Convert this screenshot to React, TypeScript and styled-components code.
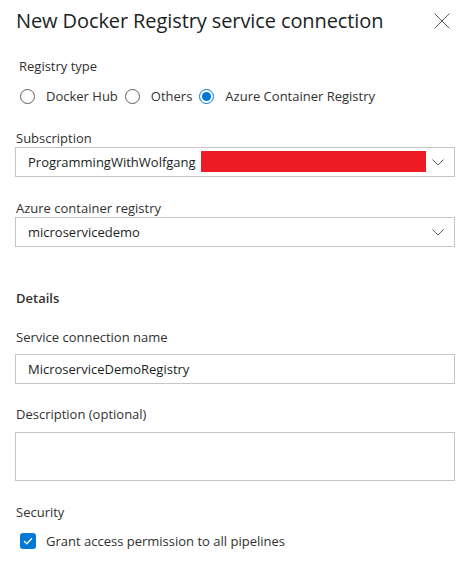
import styled, { createGlobalStyle } from "styled-components";

const textColor = "#201f1e";
const borderColor = "#c8c6c4";
const accent = "#0078d4";

const GlobalStyle = createGlobalStyle`
  body {
    margin: 0;
    background: #ffffff;
    font-family: "Open Sans", "Noto Sans", sans-serif;
    color: ${textColor};
  }
`;

const Panel = styled.div`
  width: 471px;
  height: 572px;
  box-sizing: border-box;
  padding: 7px 16px 0 15px;
  display: flex;
  flex-direction: column;
`;

const Header = styled.div`
  display: flex;
  align-items: center;
  justify-content: space-between;
  height: 28px;
  padding-left: 1px;
`;

const Title = styled.h1`
  margin: 0;
  font-size: 20px;
  font-weight: 400;
  letter-spacing: -0.1px;
  line-height: 28px;
`;

const CloseButton = styled.button`
  border: 0;
  background: none;
  padding: 0;
  margin-right: 4px;
  width: 18px;
  height: 18px;
  display: flex;
  align-items: center;
  justify-content: center;
`;

const Label = styled.div<{ $top: number; $indent?: number }>`
  margin-top: ${(p) => p.$top}px;
  padding-left: ${(p) => p.$indent ?? 1}px;
  font-size: 13px;
  line-height: 18px;
  color: #323130;
`;

const SectionTitle = styled(Label)`
  font-weight: 600;
`;

const RadioRow = styled.div`
  margin-top: 11px;
  display: flex;
  align-items: center;
  padding-left: 5px;
  height: 20px;
`;

const RadioOption = styled.label`
  display: flex;
  align-items: center;
  margin-right: 7px;
  font-size: 13px;
  color: #323130;
`;

const RadioCircle = styled.span<{ $checked?: boolean }>`
  width: 13px;
  height: 13px;
  border-radius: 50%;
  border: 1px solid ${(p) => (p.$checked ? accent : "#605e5c")};
  margin-right: 11px;
  display: flex;
  align-items: center;
  justify-content: center;
  &::after {
    content: "";
    width: 9px;
    height: 9px;
    border-radius: 50%;
    background: ${(p) => (p.$checked ? accent : "transparent")};
  }
`;

const Field = styled.div<{ $height?: number; $gap?: number }>`
  margin-top: ${(p) => p.$gap ?? 0}px;
  height: ${(p) => p.$height ?? 30}px;
  box-sizing: border-box;
  border: 1px solid ${borderColor};
  display: flex;
  align-items: center;
  padding: 0 10px 0 12px;
  font-size: 13px;
  color: ${textColor};
`;

const FieldText = styled.span`
  white-space: nowrap;
`;

const Redacted = styled.span`
  flex: 1;
  align-self: stretch;
  margin: 3px 6px 4px 5px;
  background: #ed1c24;
`;

const Chevron = styled.span`
  margin-left: auto;
  display: flex;
`;

const CheckRow = styled.label`
  margin-top: 11px;
  padding-left: 5px;
  display: flex;
  align-items: center;
  font-size: 13px;
  line-height: 18px;
  color: #323130;
`;

const CheckBox = styled.span`
  width: 16px;
  height: 16px;
  border-radius: 3px;
  background: ${accent};
  margin-right: 10px;
  display: flex;
  align-items: center;
  justify-content: center;
`;

const ChevronIcon = () => (
  <svg width="12" height="7" viewBox="0 0 12 7">
    <path d="M0.5 0.5 L6 6 L11.5 0.5" fill="none" stroke="#605e5c" strokeWidth="1" />
  </svg>
);

export default function App() {
  return (
    <>
      <GlobalStyle />
      <Panel>
        <Header>
          <Title>New Docker Registry service connection</Title>
          <CloseButton aria-label="Close">
            <svg width="16" height="16" viewBox="0 0 16 16">
              <path d="M0.5 0.5 L15.5 15.5 M15.5 0.5 L0.5 15.5" stroke="#605e5c" strokeWidth="1" />
            </svg>
          </CloseButton>
        </Header>

        <Label $top={22} $indent={4}>Registry type</Label>
        <RadioRow>
          <RadioOption>
            <RadioCircle />
            Docker Hub
          </RadioOption>
          <RadioOption>
            <RadioCircle />
            Others
          </RadioOption>
          <RadioOption>
            <RadioCircle $checked />
            Azure Container Registry
          </RadioOption>
        </RadioRow>

        <Label $top={23}>Subscription</Label>
        <Field>
          <FieldText>ProgrammingWithWolfgang</FieldText>
          <Redacted />
          <ChevronIcon />
        </Field>

        <Label $top={22}>Azure container registry</Label>
        <Field>
          <FieldText>microservicedemo</FieldText>
          <Chevron>
            <ChevronIcon />
          </Chevron>
        </Field>

        <SectionTitle $top={42}>Details</SectionTitle>

        <Label $top={21}>Service connection name</Label>
        <Field $gap={8}>
          <FieldText>MicroserviceDemoRegistry</FieldText>
        </Field>

        <Label $top={21}>Description (optional)</Label>
        <Field $gap={9} $height={49} />

        <Label $top={22}>Security</Label>
        <CheckRow>
          <CheckBox>
            <svg width="10" height="8" viewBox="0 0 10 8">
              <path d="M1 4 L3.8 6.8 L9 1.2" fill="none" stroke="#ffffff" strokeWidth="1.3" />
            </svg>
          </CheckBox>
          Grant access permission to all pipelines
        </CheckRow>
      </Panel>
    </>
  );
}
